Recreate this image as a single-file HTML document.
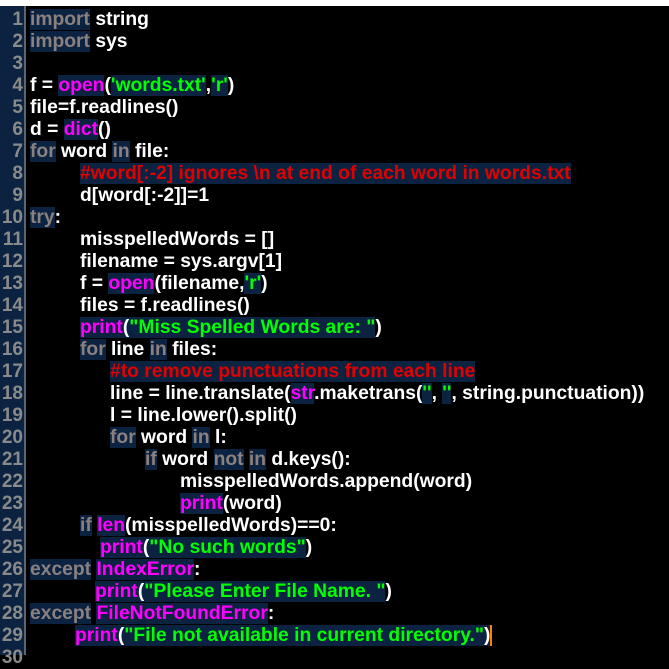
<!DOCTYPE html>
<html><head><meta charset="utf-8"><style>
body{margin:0;width:669px;height:655px;background:#000;overflow:hidden;position:relative;font-family:"Liberation Sans",Arial,sans-serif;font-weight:bold;font-size:19.3px;color:#fff}
#top{position:absolute;left:0;top:0;width:669px;height:6px;background:#fff}
#gut{position:absolute;left:0;top:6px;width:24px;height:649px;background:#0b2340;border-right:2px solid #5a6472}
.n{position:absolute;left:0;width:23px;text-align:right;color:#8a8a8a;height:22px;line-height:22px;font-size:19px}
.l{position:absolute;height:22px;line-height:22px;white-space:pre}
.k{color:#8a8080;background:#0b2340}
.b{color:#ff00ff;background:#0b2340}
.s{color:#00ff00;background:#0b2340}
.c{color:#e00000;background:#0b2340}
</style></head><body>
<div id="top"></div><div id="gut"></div>
<div class="n" style="top:9px">1</div><div class="n" style="top:31px">2</div><div class="n" style="top:53px">3</div><div class="n" style="top:75px">4</div><div class="n" style="top:97px">5</div><div class="n" style="top:119px">6</div><div class="n" style="top:141px">7</div><div class="n" style="top:163px">8</div><div class="n" style="top:185px">9</div><div class="n" style="top:207px">10</div><div class="n" style="top:229px">11</div><div class="n" style="top:251px">12</div><div class="n" style="top:273px">13</div><div class="n" style="top:295px">14</div><div class="n" style="top:317px">15</div><div class="n" style="top:339px">16</div><div class="n" style="top:361px">17</div><div class="n" style="top:383px">18</div><div class="n" style="top:405px">19</div><div class="n" style="top:427px">20</div><div class="n" style="top:449px">21</div><div class="n" style="top:471px">22</div><div class="n" style="top:493px">23</div><div class="n" style="top:515px">24</div><div class="n" style="top:537px">25</div><div class="n" style="top:559px">26</div><div class="n" style="top:581px">27</div><div class="n" style="top:603px">28</div><div class="n" style="top:625px">29</div><div class="n" style="top:647px">30</div>

<div class="l" style="left:30px;top:9px"><span class="k">import</span> string</div>
<div class="l" style="left:30px;top:31px"><span class="k">import</span> sys</div>
<div class="l" style="left:30px;top:75px">f = <span class="b">open</span>(<span class="s">'words.txt'</span>,<span class="s">'r'</span>)</div>
<div class="l" style="left:30px;top:97px">file=f.readlines()</div>
<div class="l" style="left:30px;top:119px">d = <span class="b">dict</span>()</div>
<div class="l" style="left:30px;top:141px"><span class="k">for</span> word <span class="k">in</span> file:</div>
<div class="l" style="left:80px;top:163px"><span class="c">#word[:-2] ignores \n at end of each word in words.txt</span></div>
<div class="l" style="left:80px;top:185px">d[word[:-2]]=1</div>
<div class="l" style="left:30px;top:207px"><span class="k">try</span>:</div>
<div class="l" style="left:80px;top:229px">misspelledWords = []</div>
<div class="l" style="left:80px;top:251px">filename = sys.argv[1]</div>
<div class="l" style="left:80px;top:273px">f = <span class="b">open</span>(filename,<span class="s">'r'</span>)</div>
<div class="l" style="left:80px;top:295px">files = f.readlines()</div>
<div class="l" style="left:80px;top:317px"><span class="b">print</span><span style="background:#0b2340">(<span class="s">"Miss Spelled Words are: "</span></span>)</div>
<div class="l" style="left:80px;top:339px"><span class="k">for</span> line <span class="k">in</span> files:</div>
<div class="l" style="left:110px;top:361px"><span class="c">#to remove punctuations from each line</span></div>
<div class="l" style="left:110px;top:383px">line = line.translate(<span class="b">str</span>.maketrans(<span class="s">''</span>, <span class="s">''</span>, string.punctuation))</div>
<div class="l" style="left:110px;top:405px">l = line.lower().split()</div>
<div class="l" style="left:110px;top:427px"><span class="k">for</span> word <span class="k">in</span> l:</div>
<div class="l" style="left:145px;top:449px"><span class="k">if</span> word <span class="k">not</span> <span class="k">in</span> d.keys():</div>
<div class="l" style="left:180px;top:471px">misspelledWords.append(word)</div>
<div class="l" style="left:180px;top:493px"><span class="b">print</span>(word)</div>
<div class="l" style="left:80px;top:515px"><span class="k">if</span> <span class="b">len</span>(misspelledWords)==0:</div>
<div class="l" style="left:100px;top:537px"><span class="b">print</span><span style="background:#0b2340">(<span class="s">"No such words"</span></span>)</div>
<div class="l" style="left:30px;top:559px"><span class="k">except</span> <span class="b">IndexError</span>:</div>
<div class="l" style="left:95px;top:581px"><span class="b">print</span><span style="background:#0b2340">(<span class="s">"Please Enter File Name. "</span></span>)</div>
<div class="l" style="left:30px;top:603px"><span class="k">except</span> <span class="b">FileNotFoundError</span>:</div>
<div class="l" style="left:75px;top:625px"><span class="b">print</span><span style="background:#0b2340">(<span class="s">"File not available in current directory."</span>)</span><span style="border-left:2px solid #ff8000"></span></div>
</body></html>
